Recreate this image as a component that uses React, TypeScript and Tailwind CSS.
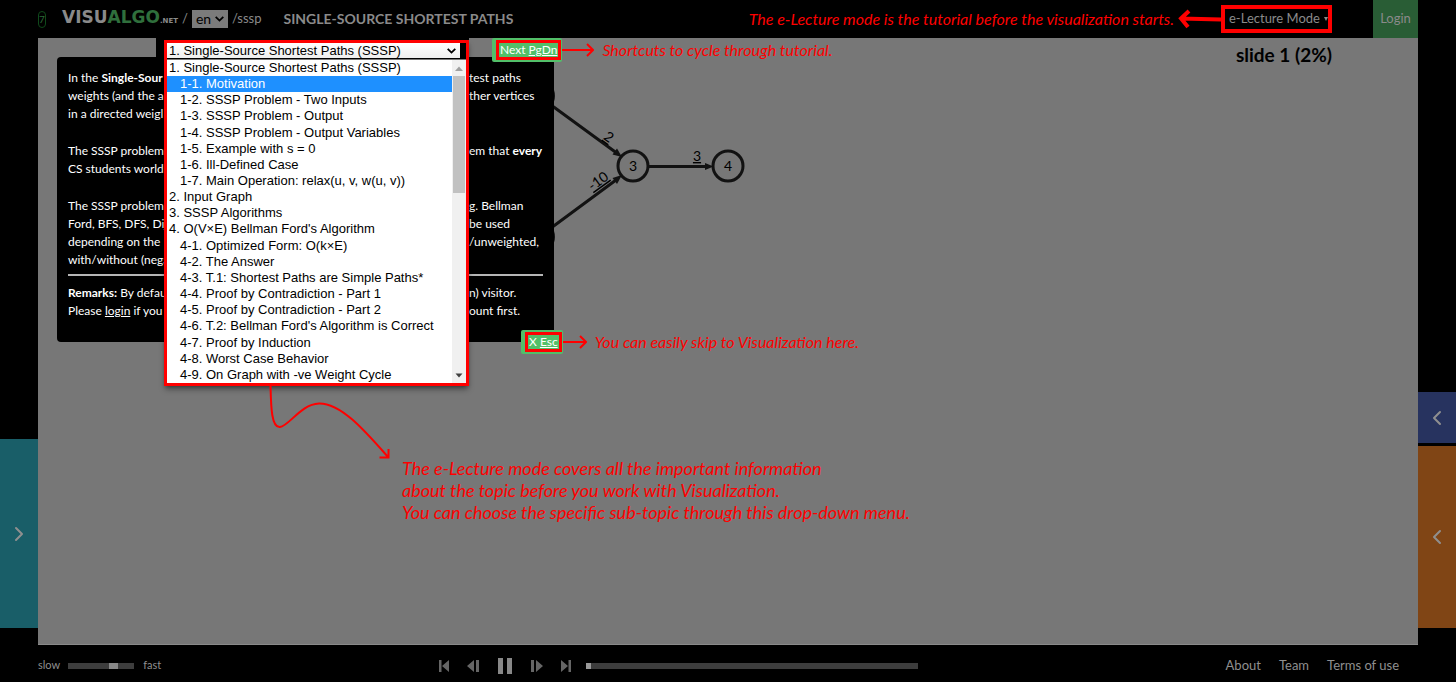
import { ChevronLeft, ChevronRight } from "lucide-react";
import type { ReactNode } from "react";

type Topic = { label: string; sub?: boolean };

const TOPICS: Topic[] = [
  { label: "1. Single-Source Shortest Paths (SSSP)" },
  { label: "1-1. Motivation", sub: true },
  { label: "1-2. SSSP Problem - Two Inputs", sub: true },
  { label: "1-3. SSSP Problem - Output", sub: true },
  { label: "1-4. SSSP Problem - Output Variables", sub: true },
  { label: "1-5. Example with s = 0", sub: true },
  { label: "1-6. Ill-Defined Case", sub: true },
  { label: "1-7. Main Operation: relax(u, v, w(u, v))", sub: true },
  { label: "2. Input Graph" },
  { label: "3. SSSP Algorithms" },
  { label: "4. O(V×E) Bellman Ford's Algorithm" },
  { label: "4-1. Optimized Form: O(k×E)", sub: true },
  { label: "4-2. The Answer", sub: true },
  { label: "4-3. T.1: Shortest Paths are Simple Paths*", sub: true },
  { label: "4-4. Proof by Contradiction - Part 1", sub: true },
  { label: "4-5. Proof by Contradiction - Part 2", sub: true },
  { label: "4-6. T.2: Bellman Ford's Algorithm is Correct", sub: true },
  { label: "4-7. Proof by Induction", sub: true },
  { label: "4-8. Worst Case Behavior", sub: true },
  { label: "4-9. On Graph with -ve Weight Cycle", sub: true },
];

const SELECTED = 1;

function Header() {
  return (
    <header className="flex h-[38px] items-center bg-black px-[38px] text-[#8a8a8a]">
      <span className="flex h-[17px] w-2 items-center justify-center rounded-sm border border-[#0f4a1a] text-[10px] text-[#2c6b38]">
        7
      </span>
      <a href="#home" className="ml-4 flex items-baseline font-['DejaVu_Sans'] text-[17px] leading-5 font-bold">
        <span>VISU</span>
        <span className="text-[#2f6f3c]">ALGO</span>
        <span className="text-[7px]">.NET</span>
      </a>
      <span className="mx-1 text-[13px]">/</span>
      <div className="relative">
        <select
          aria-label="Language"
          className="block h-[18px] w-9 appearance-none bg-[#7b7b7b] pl-1 text-sm leading-[18px] text-black"
        >
          <option>en</option>
        </select>
        <Caret className="absolute top-[6px] right-[4px]" />
      </div>
      <span className="ml-1 text-[13px]">/sssp</span>
      <h1 className="ml-[22px] text-sm font-bold whitespace-nowrap">SINGLE-SOURCE SHORTEST PATHS</h1>

      <p className="ml-auto text-base whitespace-nowrap text-[#f00] italic">
        The e-Lecture mode is the tutorial before the visualization starts.
      </p>
      <svg className="ml-1 h-5 w-[43px] shrink-0" viewBox="0 0 43 20" fill="none" stroke="#f00" strokeWidth="4">
        <path d="M43 10.500L3 9.500M11 2L3 9.500L10 18" />
      </svg>
      <button className="flex h-7 w-[111px] items-center justify-between border-4 border-[#f00] pl-1 text-[13px] whitespace-nowrap">
        e-Lecture Mode
        <svg className="h-1 w-1" viewBox="0 0 4 4" fill="#8a8a8a">
          <path d="M0 0H4L2 4Z" />
        </svg>
      </button>
      <a href="#login" className="ml-[41px] flex h-[38px] w-[45px] items-center justify-center bg-[#295d35] text-[13px]">
        Login
      </a>
    </header>
  );
}

function Caret({ className }: { className: string }) {
  return (
    <svg
      className={`pointer-events-none h-[6px] w-[9px] ${className}`}
      viewBox="0 0 9 6"
      fill="none"
      stroke="#000"
      strokeWidth="1.800"
    >
      <path d="M0.700 0.800L4.500 4.600L8.300 0.800" />
    </svg>
  );
}

function Graph() {
  return (
    <svg
      className="absolute top-0 left-[460px] h-[230px] w-[260px]"
      viewBox="498 38 260 230"
      fill="none"
      stroke="#121212"
      strokeWidth="3"
    >
      <circle cx="538.500" cy="96" r="15" />
      <circle cx="538.500" cy="237" r="15" />
      <circle cx="633" cy="166" r="15" />
      <circle cx="728" cy="166" r="15" />
      <path d="M551 105L616 152.500M551 228L616 180M649 166.500H706" />
      <g fill="#121212" stroke="none">
        <path d="M622 157L612.500 154.500L617 148.500Z" />
        <path d="M622 175L617 184L612.500 178Z" />
        <path d="M713.500 166.500L705 170V163Z" />
      </g>
      <g fill="#000" stroke="none" fontSize="14" textAnchor="middle">
        <text x="633" y="171">3</text>
        <text x="728" y="171">4</text>
        <text x="697" y="161" textDecoration="underline">3</text>
        <text textDecoration="underline" transform="translate(606 141) rotate(36)">2</text>
        <text textDecoration="underline" transform="translate(601 185) rotate(-36)">-10</text>
      </g>
    </svg>
  );
}

// one line of the lecture text, either side of the open menu
function Line({ start, end }: { start: ReactNode; end?: ReactNode }) {
  return (
    <span className="grid grid-cols-[401px_1fr] whitespace-nowrap">
      <span>{start}</span>
      <span>{end}</span>
    </span>
  );
}

function LecturePanel() {
  return (
    <section className="absolute top-[19px] left-[19px] h-[285px] w-[497px] rounded-sm bg-black px-[11px] pt-3 text-xs leading-[18px] text-white">
      <p>
        <Line start={<>In the <b>Single-Sour</b></>} end="test paths" />
        <Line start="weights (and the a" end="ther vertices" />
        <Line start="in a directed weigl" />
      </p>
      <p className="mt-[19px]">
        <Line start="The SSSP problem" end={<>em that <b>every</b></>} />
        <Line start="CS students world" />
      </p>
      <p className="mt-[19px]">
        <Line start="The SSSP problem" end="g. Bellman" />
        <Line start="Ford, BFS, DFS, Dijl" end="be used" />
        <Line start="depending on the" end="/unweighted," />
        <Line start="with/without (nega" />
      </p>
      <hr className="mt-[5px] mb-[8px] border-t-2 border-[#b5b5b5]" />
      <p>
        <Line start={<><b>Remarks:</b> By defau</>} end="n) visitor." />
        <Line start={<>Please <a href="#login" className="underline">login</a> if you</>} end="ount first." />
      </p>
    </section>
  );
}

function TopicMenu() {
  return (
    <div className="absolute top-0 left-[118px] w-[313px] pt-[2px] pl-2">
      <div className="absolute inset-x-0 top-0 h-5 bg-black" />
      <div className="relative border-3 border-[#f00] bg-white font-['Liberation_Sans'] text-black shadow-md shadow-black/40">
        <div className="relative bg-black pr-[6px] pb-px">
          <select
            aria-label="Topic"
            className="block h-[15px] w-full appearance-none bg-linear-to-b from-white to-[#efefef] pl-[2px] text-[13px] leading-[15px]"
          >
            <option>1. Single-Source Shortest Paths (SSSP)</option>
          </select>
          <Caret className="absolute top-[5px] right-[10px]" />
        </div>
        <div className="flex h-[324px] border-t border-[#777]">
          <ul role="listbox" aria-label="Topics" className="grid flex-1 auto-rows-fr text-[13px] leading-4">
            {TOPICS.map((topic, i) => (
              <li
                key={topic.label}
                role="option"
                aria-selected={i === SELECTED}
                className={`whitespace-nowrap ${topic.sub ? "pl-[13px]" : "pl-[2px]"} ${
                  i === SELECTED ? "bg-[#1e90ff] text-white" : ""
                }`}
              >
                {topic.label}
              </li>
            ))}
          </ul>
          <div className="flex w-[14px] flex-col items-center bg-[#f0f0f0]">
            <svg className="h-4 w-[14px]" viewBox="0 0 14 16" fill="#a0a0a0">
              <path d="M3 11L7 6.500L11 11Z" />
            </svg>
            <div className="h-[117px] w-3 bg-[#c1c1c1]" />
            <svg className="mt-auto h-4 w-[14px]" viewBox="0 0 14 16" fill="#404040">
              <path d="M3.500 6.500H10.500L7 10.500Z" />
            </svg>
          </div>
        </div>
      </div>
    </div>
  );
}

function Callout({ className, width, children, note }: { className: string; width: string; children: ReactNode; note: string }) {
  return (
    <div className={`absolute flex items-center ${className}`}>
      <button className="rounded-xs bg-[#52bf69] py-[2px] pr-px pl-1 text-xs leading-[14px] text-white">
        <span className="block border-3 border-[#f00] px-px whitespace-nowrap">{children}</span>
      </button>
      <svg className={`h-4 shrink-0 ${width}`} viewBox="0 0 32 16" preserveAspectRatio="xMaxYMid slice" fill="none" stroke="#f00" strokeWidth="2">
        <path d="M0 8H31M25 2L31 8L25 14" />
      </svg>
      <p className="ml-2 text-base leading-5 whitespace-nowrap text-[#f00] italic">{note}</p>
    </div>
  );
}

function Canvas() {
  return (
    <main className="relative min-w-0 flex-1 border-b border-[#8a8a8a] bg-[#777]">
      <Graph />
      <LecturePanel />
      <TopicMenu />
      <Callout className="top-0 left-[454px]" width="w-8" note="Shortcuts to cycle through tutorial.">
        Next <u>PgDn</u>
      </Callout>
      <Callout className="top-[292px] left-[483px]" width="w-6" note="You can easily skip to Visualization here.">
        X <u>Esc</u>
      </Callout>
      <svg className="absolute top-[347px] left-[228px] h-20 w-[130px]" viewBox="266 385 130 80" fill="none" stroke="#f00" strokeWidth="2">
        <path d="M270.500 385C271 404 271 428 280 427C289 426 301 404 319 403.500C341 403 365 431 388 457M388.500 449V457.500H379.500" />
      </svg>
      <p className="absolute top-[419px] left-[364px] text-lg leading-[22px] whitespace-nowrap text-[#f00] italic">
        The e-Lecture mode covers all the important information
        <br />
        about the topic before you work with Visualization.
        <br />
        You can choose the specific sub-topic through this drop-down menu.
      </p>
      <h2 className="absolute top-[5px] right-[86px] text-[19px] leading-6 font-bold text-black">slide 1 (2%)</h2>
    </main>
  );
}

function Footer() {
  const icon = "fill-[#666]";
  return (
    <footer className="flex h-[37px] items-center bg-black px-[38px] pt-1 text-[#8f8f8f]">
      <label className="flex w-[401px] items-center text-[11px]">
        <span>slow</span>
        <input
          type="range"
          defaultValue={72}
          className="mr-[9px] ml-2 h-[6px] w-[66px] appearance-none bg-[#3d3d3d] [&::-webkit-slider-thumb]:h-[6px] [&::-webkit-slider-thumb]:w-[9px] [&::-webkit-slider-thumb]:appearance-none [&::-webkit-slider-thumb]:bg-[#888]"
        />
        <span>fast</span>
      </label>
      <div className="flex items-center">
        <button aria-label="Go to beginning">
          <svg className={`h-3 w-[10px] ${icon}`} viewBox="0 0 10 12">
            <path d="M0 0H2.500V12H0ZM10 0V12L3 6Z" />
          </svg>
        </button>
        <button aria-label="Step back" className="ml-[18px]">
          <svg className={`h-3 w-3 ${icon}`} viewBox="0 0 12 12">
            <path d="M9 0H12V12H9ZM7 0V12L0 6Z" />
          </svg>
        </button>
        <button aria-label="Pause" className="ml-[19px]">
          <svg className="h-4 w-[14px] fill-[#888]" viewBox="0 0 14 16">
            <path d="M0 0H5V16H0ZM9 0H14V16H9Z" />
          </svg>
        </button>
        <button aria-label="Step forward" className="ml-[19px]">
          <svg className={`h-3 w-3 ${icon}`} viewBox="0 0 12 12">
            <path d="M0 0H3V12H0ZM5 0V12L12 6Z" />
          </svg>
        </button>
        <button aria-label="Go to end" className="ml-[18px]">
          <svg className={`h-3 w-[10px] ${icon}`} viewBox="0 0 10 12">
            <path d="M7.500 0H10V12H7.500ZM0 0V12L7 6Z" />
          </svg>
        </button>
        <input
          type="range"
          aria-label="Progress"
          defaultValue={0}
          className="ml-[15px] h-[6px] w-[332px] appearance-none bg-[#3d3d3d] [&::-webkit-slider-thumb]:h-[6px] [&::-webkit-slider-thumb]:w-[5px] [&::-webkit-slider-thumb]:appearance-none [&::-webkit-slider-thumb]:bg-[#999]"
        />
      </div>
      <nav className="mr-[19px] ml-auto flex gap-[18px] text-[13px] whitespace-nowrap">
        <a href="#about">About</a>
        <a href="#team">Team</a>
        <a href="#terms">Terms of use</a>
      </nav>
    </footer>
  );
}

export default function App() {
  return (
    <div className="flex min-h-screen flex-col bg-black font-['Lato',sans-serif]">
      <Header />
      <div className="flex flex-1">
        <aside className="flex w-[38px] flex-col justify-end pb-[17px]">
          <button aria-label="Open actions" className="flex h-[189px] items-center justify-center bg-[#195e68] text-[#8f8f8f]">
            <ChevronRight size={24} strokeWidth={2} />
          </button>
        </aside>
        <Canvas />
        <aside className="flex w-[38px] flex-col justify-end gap-[3px] pb-[17px] text-[#8f8f8f]">
          <button aria-label="Open status" className="flex h-[51px] items-center justify-center bg-[#27335f]">
            <ChevronLeft size={24} strokeWidth={2} />
          </button>
          <button aria-label="Open code trace" className="flex h-[182px] items-center justify-center bg-[#804515]">
            <ChevronLeft size={24} strokeWidth={2} />
          </button>
        </aside>
      </div>
      <Footer />
    </div>
  );
}
